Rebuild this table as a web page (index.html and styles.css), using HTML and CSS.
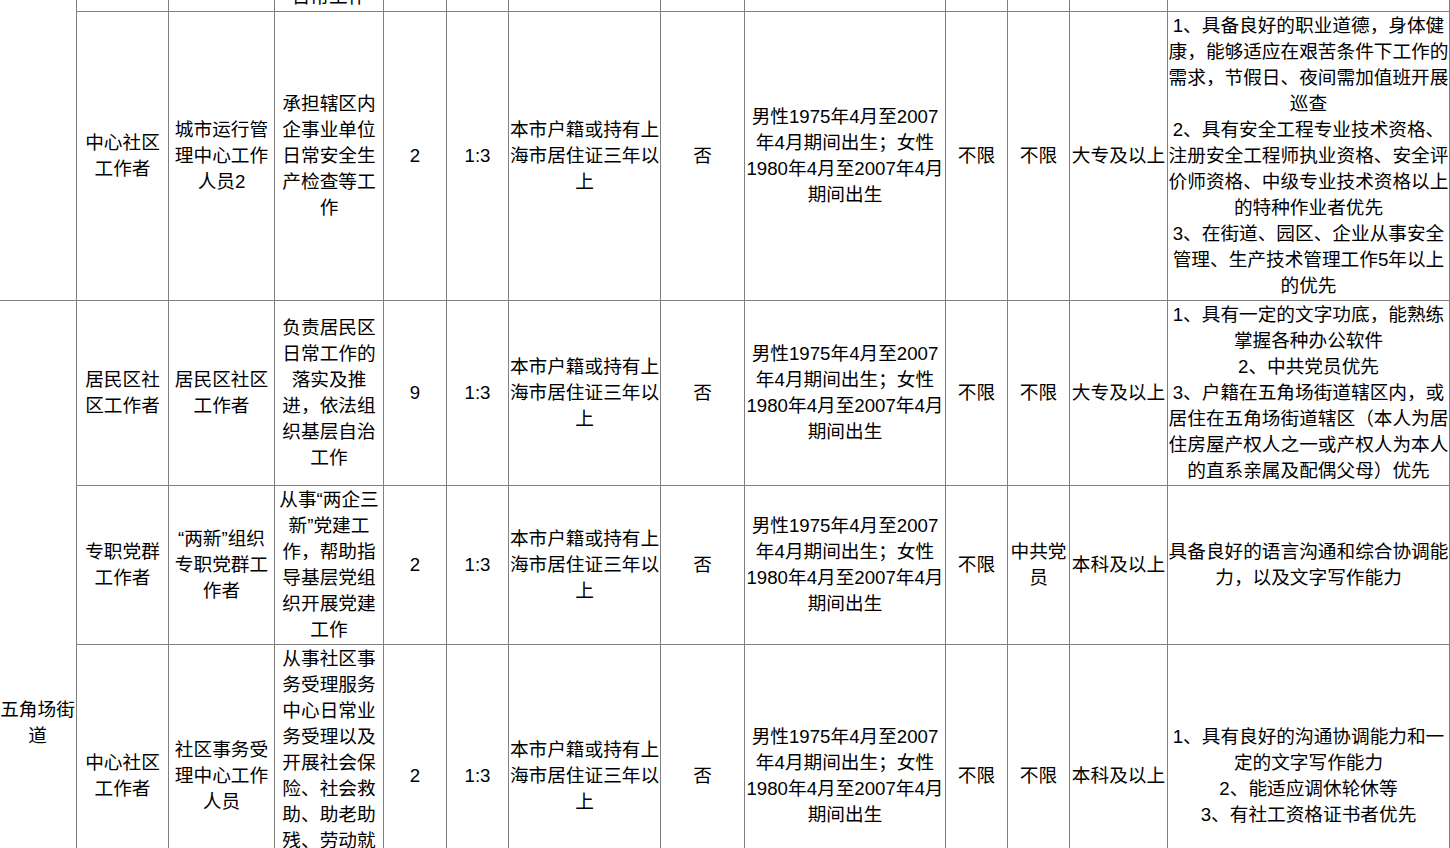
FILE: index.html
```html
<!DOCTYPE html>
<html lang="zh-CN">
<head>
<meta charset="utf-8">
<title>招聘岗位表</title>
<link rel="stylesheet" href="styles.css">
</head>
<body>
<table class="sheet">
  <colgroup>
    <col class="c-street"><col class="c-type"><col class="c-post"><col class="c-duty">
    <col class="c-num"><col class="c-ratio"><col class="c-huji"><col class="c-flag">
    <col class="c-age"><col class="c-narrow"><col class="c-narrow"><col class="c-edu"><col class="c-req">
  </colgroup>
  <tbody>
    <tr>
      <td rowspan="2"></td>
      <td>中心社区工作者</td>
      <td>城市运行管理中心工作人员1</td>
      <td>负责辖区内城市运行管理、网格巡查、隐患排查、应急处置及协调等日常工作</td>
      <td>2</td>
      <td>1:3</td>
      <td>本市户籍或持有上海市居住证三年以上</td>
      <td>否</td>
      <td>男性1975年4月至2007年4月期间出生；女性1980年4月至2007年4月期间出生</td>
      <td>不限</td>
      <td>不限</td>
      <td>大专及以上</td>
      <td>1、具备良好的职业道德，能够适应在艰苦条件下工作的需求，节假日、夜间需加值班开展巡查<br>2、具有相关工作经验者优先</td>
    </tr>
    <tr>
      <td>中心社区工作者</td>
      <td>城市运行管理中心工作人员2</td>
      <td>承担辖区内企事业单位日常安全生产检查等工作</td>
      <td>2</td>
      <td>1:3</td>
      <td>本市户籍或持有上海市居住证三年以上</td>
      <td>否</td>
      <td>男性1975年4月至2007年4月期间出生；女性1980年4月至2007年4月期间出生</td>
      <td>不限</td>
      <td>不限</td>
      <td>大专及以上</td>
      <td>1、具备良好的职业道德，身体健康，能够适应在艰苦条件下工作的需求，节假日、夜间需加值班开展巡查<br>2、具有安全工程专业技术资格、注册安全工程师执业资格、安全评价师资格、中级专业技术资格以上的特种作业者优先<br>3、在街道、园区、企业从事安全管理、生产技术管理工作5年以上的优先</td>
    </tr>
    <tr>
      <td rowspan="4">五角场街道</td>
      <td>居民区社区工作者</td>
      <td>居民区社区工作者</td>
      <td>负责居民区日常工作的落实及推进，依法组织基层自治工作</td>
      <td>9</td>
      <td>1:3</td>
      <td>本市户籍或持有上海市居住证三年以上</td>
      <td>否</td>
      <td>男性1975年4月至2007年4月期间出生；女性1980年4月至2007年4月期间出生</td>
      <td>不限</td>
      <td>不限</td>
      <td>大专及以上</td>
      <td>1、具有一定的文字功底，能熟练掌握各种办公软件<br>2、中共党员优先<br>3、户籍在五角场街道辖区内，或居住在五角场街道辖区（本人为居住房屋产权人之一或产权人为本人的直系亲属及配偶父母）优先</td>
    </tr>
    <tr>
      <td>专职党群工作者</td>
      <td>“两新”组织专职党群工作者</td>
      <td>从事“两企三新”党建工作，帮助指导基层党组织开展党建工作</td>
      <td>2</td>
      <td>1:3</td>
      <td>本市户籍或持有上海市居住证三年以上</td>
      <td>否</td>
      <td>男性1975年4月至2007年4月期间出生；女性1980年4月至2007年4月期间出生</td>
      <td>不限</td>
      <td>中共党员</td>
      <td>本科及以上</td>
      <td>具备良好的语言沟通和综合协调能力，以及文字写作能力</td>
    </tr>
    <tr>
      <td>中心社区工作者</td>
      <td>社区事务受理中心工作人员</td>
      <td>从事社区事务受理服务中心日常业务受理以及开展社会保险、社会救助、助老助残、劳动就业等各类政策咨询工作</td>
      <td>2</td>
      <td>1:3</td>
      <td>本市户籍或持有上海市居住证三年以上</td>
      <td>否</td>
      <td>男性1975年4月至2007年4月期间出生；女性1980年4月至2007年4月期间出生</td>
      <td>不限</td>
      <td>不限</td>
      <td>本科及以上</td>
      <td>1、具有良好的沟通协调能力和一定的文字写作能力<br>2、能适应调休轮休等<br>3、有社工资格证书者优先</td>
    </tr>
    <tr class="row-tall">
      <td>中心社区工作者</td>
      <td>社区综合服务人员</td>
      <td>从事社区综合服务及相关工作</td>
      <td>1</td>
      <td>1:3</td>
      <td>本市户籍或持有上海市居住证三年以上</td>
      <td>否</td>
      <td>男性1975年4月至2007年4月期间出生；女性1980年4月至2007年4月期间出生</td>
      <td>不限</td>
      <td>不限</td>
      <td>大专及以上</td>
      <td>具有良好的沟通协调能力</td>
    </tr>
  </tbody>
</table>
</body>
</html>
```
FILE: styles.css
```css
html, body {
  margin: 0;
  padding: 0;
  background: #ffffff;
  overflow: hidden;
}

.sheet {
  border-collapse: separate;
  border-spacing: 0;
  table-layout: fixed;
  width: 1451px;
  margin-top: -173px;
  margin-left: -1px;
  font-family: "Liberation Sans", Arial, "Noto Sans CJK SC", sans-serif;
  font-size: 14pt;
  line-height: 26px;
  color: #000000;
}

.sheet td {
  padding: 1px 0;
  border-right: 1px solid #808080;
  border-bottom: 1px solid #808080;
  text-align: center;
  vertical-align: middle;
  word-break: normal;
  overflow-wrap: break-word;
}

.c-street { width: 78px; }
.c-type { width: 92px; }
.c-post { width: 106px; }
.c-duty { width: 109px; }
.c-num { width: 63px; }
.c-ratio { width: 62px; }
.c-huji { width: 152px; }
.c-flag { width: 84px; }
.c-age { width: 201px; }
.c-narrow { width: 62px; }
.c-edu { width: 98px; }
.c-req { width: 282px; }

.row-tall { height: 237px; }
```
